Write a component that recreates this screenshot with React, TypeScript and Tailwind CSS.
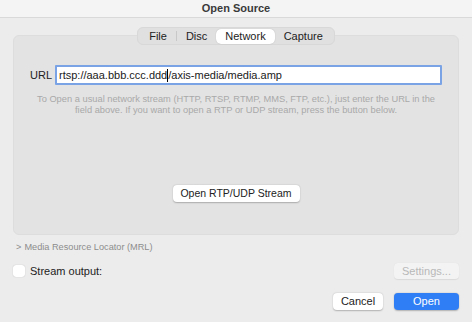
export default function App() {
  return (
    <div className="w-[474px] h-[325px] bg-white font-['Liberation_Sans',sans-serif]">
      <div className="w-[472px] h-[322px] bg-[#ececec] flex flex-col">
        <div className="h-[18px] bg-[#f4f4f4] border-b border-[#d9d9d9] flex items-center justify-center">
          <p className="text-[11px] font-bold text-[#3a3a3a] leading-none">Open Source</p>
        </div>

        <div className="flex flex-col px-[13px] pt-[9px]">
          <div className="relative z-10 self-center flex items-center h-[18px] rounded-[6px] bg-[#e0e0e0] border border-[#d8d8d8] px-[2px] text-[11px] text-[#222]">
            <span className="px-[9px] leading-none">File</span>
            <span className="w-px h-[10px] bg-[#c8c8c8]" />
            <span className="px-[9px] leading-none">Disc</span>
            <span className="px-[9px] h-[15px] flex items-center bg-white rounded-[5px] shadow-[0_0_1px_rgba(0,0,0,0.25)] leading-none">Network</span>
            <span className="px-[9px] leading-none">Capture</span>
          </div>

          <div className="-mt-[10px] h-[200px] rounded-[6px] bg-[#e3e3e3] border border-[#dddddd] flex flex-col px-[16px] pt-[29px]">
            <div className="flex items-center gap-[5px]">
              <span className="w-[20px] text-[11px] text-[#222] text-right">URL</span>
              <div className="flex-1 h-[20px] bg-white border-2 border-[#7aa3e5] rounded-[1px] flex items-center pl-[2px] text-[11px] text-[#1a1a1a]">
                <span>rtsp://aaa.bbb.ccc.ddd</span>
                <span className="w-px h-[13px] bg-black" />
                <span>/axis-media/media.amp</span>
              </div>
            </div>
            <p className="mt-[9px] text-center whitespace-nowrap text-[9.3px] leading-[11px] text-[#a9a9a9]">
              To Open a usual network stream (HTTP, RTSP, RTMP, MMS, FTP, etc.), just enter the URL in the
              <br />
              field above. If you want to open a RTP or UDP stream, press the button below.
            </p>
            <div className="mt-[69px] flex justify-center">
              <button className="h-[17px] w-[127px] bg-white rounded-[4px] shadow-[0_0.5px_1.5px_rgba(0,0,0,0.25)] text-[10.5px] text-[#222] leading-none">
                Open RTP/UDP Stream
              </button>
            </div>
          </div>

          <div className="mt-[6px] flex items-center gap-[3px] pl-[3px] text-[9.2px] text-[#8c8c8c]">
            <span>&gt;</span>
            <span>Media Resource Locator (MRL)</span>
          </div>

          <div className="mt-[8px] flex items-center">
            <span className="w-[12px] h-[12px] bg-white rounded-[3px] shadow-[0_0_1px_rgba(0,0,0,0.3)]" />
            <span className="ml-[5px] text-[11px] text-[#222]">Stream output:</span>
            <button className="ml-auto w-[65px] h-[16px] rounded-[4px] bg-[#f3f3f3] shadow-[0_0.5px_1px_rgba(0,0,0,0.08)] text-[11px] text-[#b8b8b8] leading-none">
              Settings...
            </button>
          </div>

          <div className="mt-[14px] flex justify-end gap-[11px]">
            <button className="w-[50px] h-[17px] rounded-[4px] bg-white shadow-[0_0.5px_1.5px_rgba(0,0,0,0.25)] text-[11px] text-[#222] leading-none">
              Cancel
            </button>
            <button className="w-[65px] h-[17px] rounded-[4px] bg-[#2f7ef6] shadow-[0_0.5px_1.5px_rgba(0,0,0,0.25)] text-[11px] text-white leading-none">
              Open
            </button>
          </div>
        </div>
      </div>
    </div>
  );
}
